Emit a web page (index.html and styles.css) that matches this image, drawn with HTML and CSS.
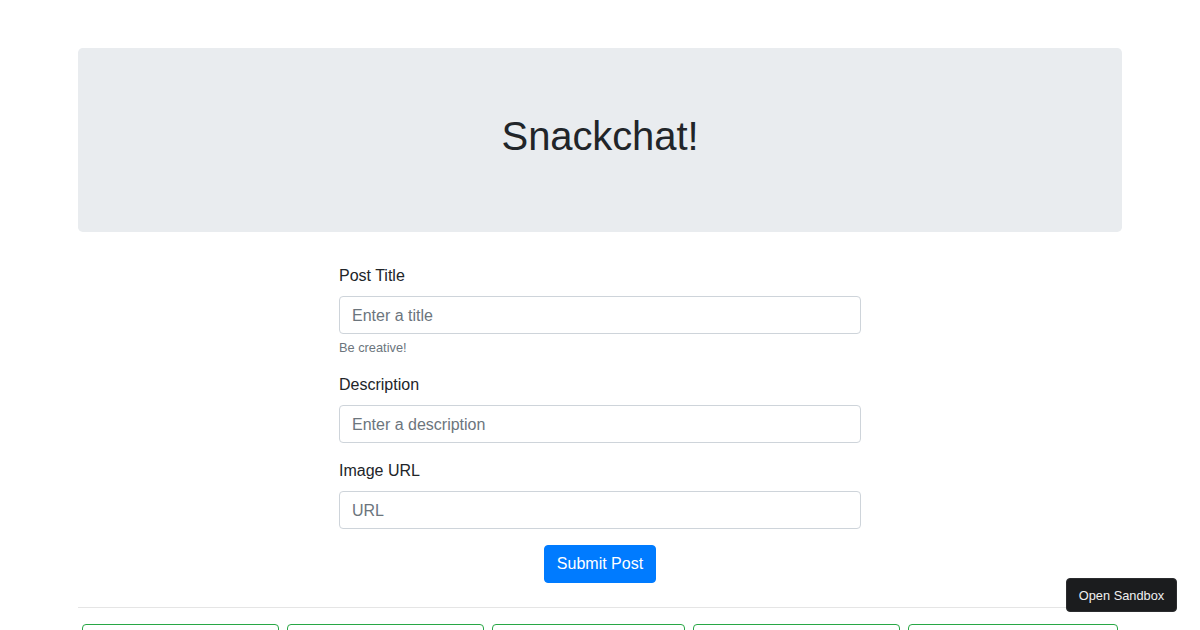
FILE: index.html
```html
<!DOCTYPE html>
<html lang="en">
<head>
<meta charset="utf-8">
<title>Snackchat!</title>
<link rel="stylesheet" href="styles.css">
</head>
<body>
<div class="container">
  <div class="jumbotron">
    <h1 class="title">Snackchat!</h1>
  </div>
  <form class="post-form">
    <div class="form-group">
      <label class="label" for="title">Post Title</label>
      <input class="input" id="title" type="text" placeholder="Enter a title">
      <small class="help">Be creative!</small>
    </div>
    <div class="form-group">
      <label class="label" for="desc">Description</label>
      <input class="input" id="desc" type="text" placeholder="Enter a description">
    </div>
    <div class="form-group">
      <label class="label" for="url">Image URL</label>
      <input class="input" id="url" type="text" placeholder="URL">
    </div>
    <div class="actions">
      <button class="btn-primary" type="button">Submit Post</button>
    </div>
  </form>
  <hr class="divider">
  <div class="cards">
    <div class="card card-1"></div>
    <div class="card card-2"></div>
    <div class="card card-3"></div>
    <div class="card card-4"></div>
    <div class="card card-5"></div>
  </div>
</div>
<button class="sandbox-btn" type="button">Open Sandbox</button>
</body>
</html>
```
FILE: styles.css
```css
* { box-sizing: border-box; }
html, body { margin: 0; padding: 0; }
body {
  font-family: "Liberation Sans", Arial, sans-serif;
  font-size: 16px;
  line-height: 1.5;
  color: #212529;
  background: #fff;
  overflow: hidden;
}
.container {
  margin: 48px 78px 0;
}
.jumbotron {
  background: #e9ecef;
  border-radius: 4.8px;
  padding: 64px 32px;
  margin-bottom: 32px;
  text-align: center;
}
.title {
  margin: 0 0 8px;
  font-size: 40px;
  font-weight: 400;
  line-height: 1.2;
  letter-spacing: -0.1px;
}
.post-form {
  width: 522px;
  margin: 0 auto;
}
.form-group {
  margin-bottom: 16px;
}
.label {
  display: block;
  margin-bottom: 8px;
}
.input {
  display: block;
  width: 100%;
  height: 38px;
  padding: 7px 12px 5px;
  font-family: inherit;
  font-size: 16px;
  line-height: 1.5;
  color: #495057;
  background: #fff;
  border: 1px solid #ced4da;
  border-radius: 4px;
  outline: none;
}
.input::placeholder { color: #6c757d; opacity: 1; }
.help {
  display: block;
  margin-top: 4px;
  font-size: 12.8px;
  line-height: 1.5;
  color: #6c757d;
}
.actions {
  display: flex;
  justify-content: center;
}
.btn-primary {
  font-family: inherit;
  font-size: 16px;
  line-height: 1.5;
  padding: 6px 11.5px;
  color: #fff;
  background: #007bff;
  border: 1px solid #007bff;
  border-radius: 4px;
}
.divider {
  margin: 24px 0 16px;
  border: 0;
  border-top: 1px solid rgba(0,0,0,.1);
}
.cards {
  display: flex;
  padding: 0 4px;
  gap: 8px;
}
.card {
  height: 200px;
  border: 1px solid #28a745;
  border-radius: 4px;
}
.card-1 { width: 197px; }
.card-2 { width: 197px; }
.card-3 { width: 193px; }
.card-4 { width: 207px; }
.card-5 { width: 210px; }
.sandbox-btn {
  position: fixed;
  right: 23px;
  bottom: 18px;
  width: 111px;
  height: 34px;
  padding: 0;
  font-family: "Liberation Sans", Arial, sans-serif;
  font-size: 12.8px;
  color: #f0f0f0;
  background: #1b1c1e;
  border: 1px solid #2b2c2e;
  border-radius: 4px;
}
```
